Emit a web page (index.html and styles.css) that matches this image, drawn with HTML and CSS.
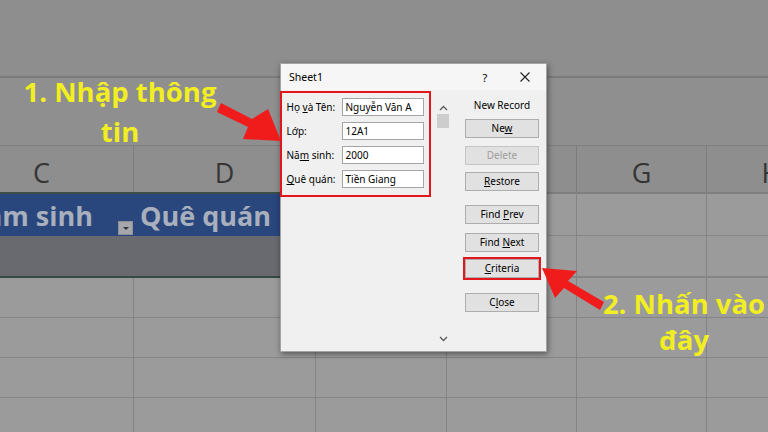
FILE: index.html
```html
<!doctype html>

<html>
 <head>
  <meta charset="utf-8">
  <title>Data Form - Sheet1</title>

  <link rel="stylesheet" href="styles.css">
 </head>

 <body>
  <div class="sheet">
   <div class="ribbon"></div>
   <div class="formula"></div>
   <div class="row colhead">
    <div class="cell">C</div><div class="cell">D</div><div class="cell">E</div>
    <div class="cell">F</div><div class="cell">G</div><div class="cell">H</div>
   </div>
   <div class="row thead">
    <div class="cell tb first"><span class="th">Năm sinh</span><i class="filter"></i></div>
    <div class="cell tb"><span class="th">Quê quán</span></div>
    <div class="cell tb"></div>
    <div class="cell"></div><div class="cell"></div><div class="cell"></div>
   </div>
   <div class="row tsel">
    <div class="cell tb"></div><div class="cell tb"></div><div class="cell tb"></div>
    <div class="cell"></div><div class="cell"></div><div class="cell"></div>
   </div>
   <div class="row"><div class="cell"></div><div class="cell"></div><div class="cell"></div><div class="cell"></div><div class="cell"></div><div class="cell"></div></div>
   <div class="row"><div class="cell"></div><div class="cell"></div><div class="cell"></div><div class="cell"></div><div class="cell"></div><div class="cell"></div></div>
   <div class="row"><div class="cell"></div><div class="cell"></div><div class="cell"></div><div class="cell"></div><div class="cell"></div><div class="cell"></div></div>
   <div class="row"><div class="cell"></div><div class="cell"></div><div class="cell"></div><div class="cell"></div><div class="cell"></div><div class="cell"></div></div>
  </div>

  <div class="dialog">
   <div class="titlebar">
    <span class="title">Sheet1</span>
    <span class="help">?</span>
    <svg class="close" width="10" height="10" viewBox="0 0 10 10"><path d="M0.5 0.5 L9.5 9.5 M9.5 0.5 L0.5 9.5" stroke="#222" stroke-width="1.1" fill="none"/></svg>
   </div>
   <div class="dbody">
    <div class="fields">
     <label>Họ <u>v</u>à Tên:</label><div class="field">Nguyễn Văn A</div>
     <label>Lớp:</label><div class="field">12A1</div>
     <label>Nă<u>m</u> sinh:</label><div class="field">2000</div>
     <label><u>Q</u>uê quán:</label><div class="field">Tiền Giang</div>
    </div>
    <div class="scroll">
     <svg class="chev up" width="9" height="6" viewBox="0 0 9 6"><path d="M1 5 L4.5 1.5 L8 5" stroke="#5a5a5a" stroke-width="1.3" fill="none"/></svg>
     <div class="thumb"></div>
     <svg class="chev down" width="9" height="6" viewBox="0 0 9 6"><path d="M1 1 L4.5 4.5 L8 1" stroke="#5a5a5a" stroke-width="1.3" fill="none"/></svg>
    </div>
    <div class="buttons">
     <div class="caption">New Record</div>
     <div class="btn b-new">Ne<u>w</u></div>
     <div class="btn b-del off">Delete</div>
     <div class="btn b-restore"><u>R</u>estore</div>
     <div class="btn b-prev">Find <u>P</u>rev</div>
     <div class="btn b-next">Find <u>N</u>ext</div>
     <div class="btn b-crit"><u>C</u>riteria</div>
     <div class="btn b-close">C<u>l</u>ose</div>
    </div>
   </div>
  </div>

  <div class="note note1">1. Nhập thông<br>tin</div>
  <div class="note note2">2. Nhấn vào<br>đây</div>

  <svg class="arrows" width="768" height="432" viewBox="0 0 768 432">
   <polygon points="221,103 252,119 268,109 281,141 243,139 248,127 217,112" fill="#f01c1c"/>
   <polygon points="542,268 577,271 568,281 604,302 600,310 564,288 555,298" fill="#f01c1c"/>
  </svg>
 </body>
</html>
```

FILE: styles.css
```css
body { margin: 0; width: 768px; height: 432px; overflow: hidden; position: relative; background: #9a9a9a; font-family: "Open Sans", sans-serif; }

/* excel sheet, dimmed behind the dialog */
.sheet { margin-left: -50px; width: 887px; }
.ribbon { height: 76px; background: #8e8e8e; }
.formula { height: 70px; box-sizing: border-box; background: #8f8f8f; border-top: 2px solid #7a7a7a; border-bottom: 1px solid #7f7f7f; }
.row { display: grid; grid-template-columns: 184px 182px 131px 130px 130px 130px; }
.cell { height: 40px; box-sizing: border-box; border-right: 1px solid #848484; border-bottom: 1px solid #858585; background: #9b9b9b; }

.colhead .cell { height: 46px; border-bottom: none; background: #8e8e8e; border-right-color: #7c7c7c; text-align: center; font-size: 27px; color: #353535; padding-top: 8px; line-height: 38px; }

.thead .cell { height: 44px; border-top: 2px solid #7e7e7e; }
.thead .cell.tb { background: #29477c; border-top-color: #3b4e48; border-bottom: none; border-right: none; display: flex; padding: 1px 0 0 6px; line-height: 41px; }
.thead .cell.first { padding-left: 14px; }
.th { flex: 1; font-size: 27px; font-weight: bold; color: #a8afbd; white-space: nowrap; }
.filter { align-self: flex-end; width: 15px; height: 14px; margin: 0 1px 1px 0; box-sizing: border-box; background: #a5a7ad; border: 1px solid #8d9097; display: flex; align-items: center; justify-content: center; }
.filter::after { content: ""; border-left: 3px solid transparent; border-right: 3px solid transparent; border-top: 3px solid #333; }

.tsel .cell { height: 42px; border-bottom: 2px solid #858585; }
.tsel .cell.tb { background: #696a6f; border-bottom-color: #354a41; border-right: none; }

/* data form dialog */
.dialog { position: absolute; left: 280px; top: 63px; width: 267px; height: 289px; box-sizing: border-box; background: #f0f0f0; border: 1px solid #a3a3a3; box-shadow: 1px 2px 6px rgba(0, 0, 0, .45); display: flex; flex-direction: column; font-family: "Noto Sans", sans-serif; font-size: 10px; color: #000; }
.titlebar { height: 26px; flex: none; display: flex; align-items: center; padding-left: 8px; background: #f6f6f6; font-size: 10.5px; }
.title { flex: 1; }
.help { width: 12px; text-align: center; margin-right: 29px; font-size: 11px; }
.close { margin-right: 16px; }

.dbody { flex: 1; display: flex; }
.fields { margin: 1px 0 0 -1px; width: 151px; height: 106px; box-sizing: border-box; border: 2.5px solid #e3161b; padding: 4.5px 0 0 4.5px; display: grid; grid-template-columns: 55px 82px; grid-auto-rows: 18px; row-gap: 6.3px; align-items: center; }
.field { height: 18px; box-sizing: border-box; background: #fff; border: 1px solid #a4a4a4; padding-left: 3px; line-height: 16px; white-space: nowrap; }

.scroll { width: 18px; margin-left: 3px; display: flex; flex-direction: column; align-items: center; }
.chev.up { margin-top: 15px; }
.thumb { width: 12px; height: 14px; margin-top: 3px; background: #cdcdcd; }
.chev.down { margin-top: auto; margin-bottom: 9px; }

.buttons { margin-left: 13px; width: 74px; padding-top: 7px; display: flex; flex-direction: column; }
.caption { height: 16px; line-height: 16px; text-align: center; }
.btn { height: 19px; box-sizing: border-box; background: #e1e1e1; border: 1px solid #adadad; text-align: center; line-height: 17px; }
.btn.off { color: #9d9d9d; border-color: #c6c6c6; }
.b-new { margin-top: 6px; }
.b-del { margin-top: 8px; }
.b-restore { margin-top: 7px; }
.b-prev { margin-top: 14px; }
.b-next { margin-top: 9px; }
.b-crit { margin-top: 7px; outline: 2px solid #e3161b; }
.b-close { margin-top: 15px; }

/* tutorial annotations */
.note { position: absolute; width: 240px; text-align: center; white-space: nowrap; font-family: "Open Sans", sans-serif; font-weight: bold; font-size: 27.5px; color: #f1ee22; }
.note1 { left: 0; top: 72px; line-height: 40px; }
.note2 { left: 564px; top: 286px; line-height: 36px; }
.arrows { position: absolute; left: 0; top: 0; pointer-events: none; }
```
